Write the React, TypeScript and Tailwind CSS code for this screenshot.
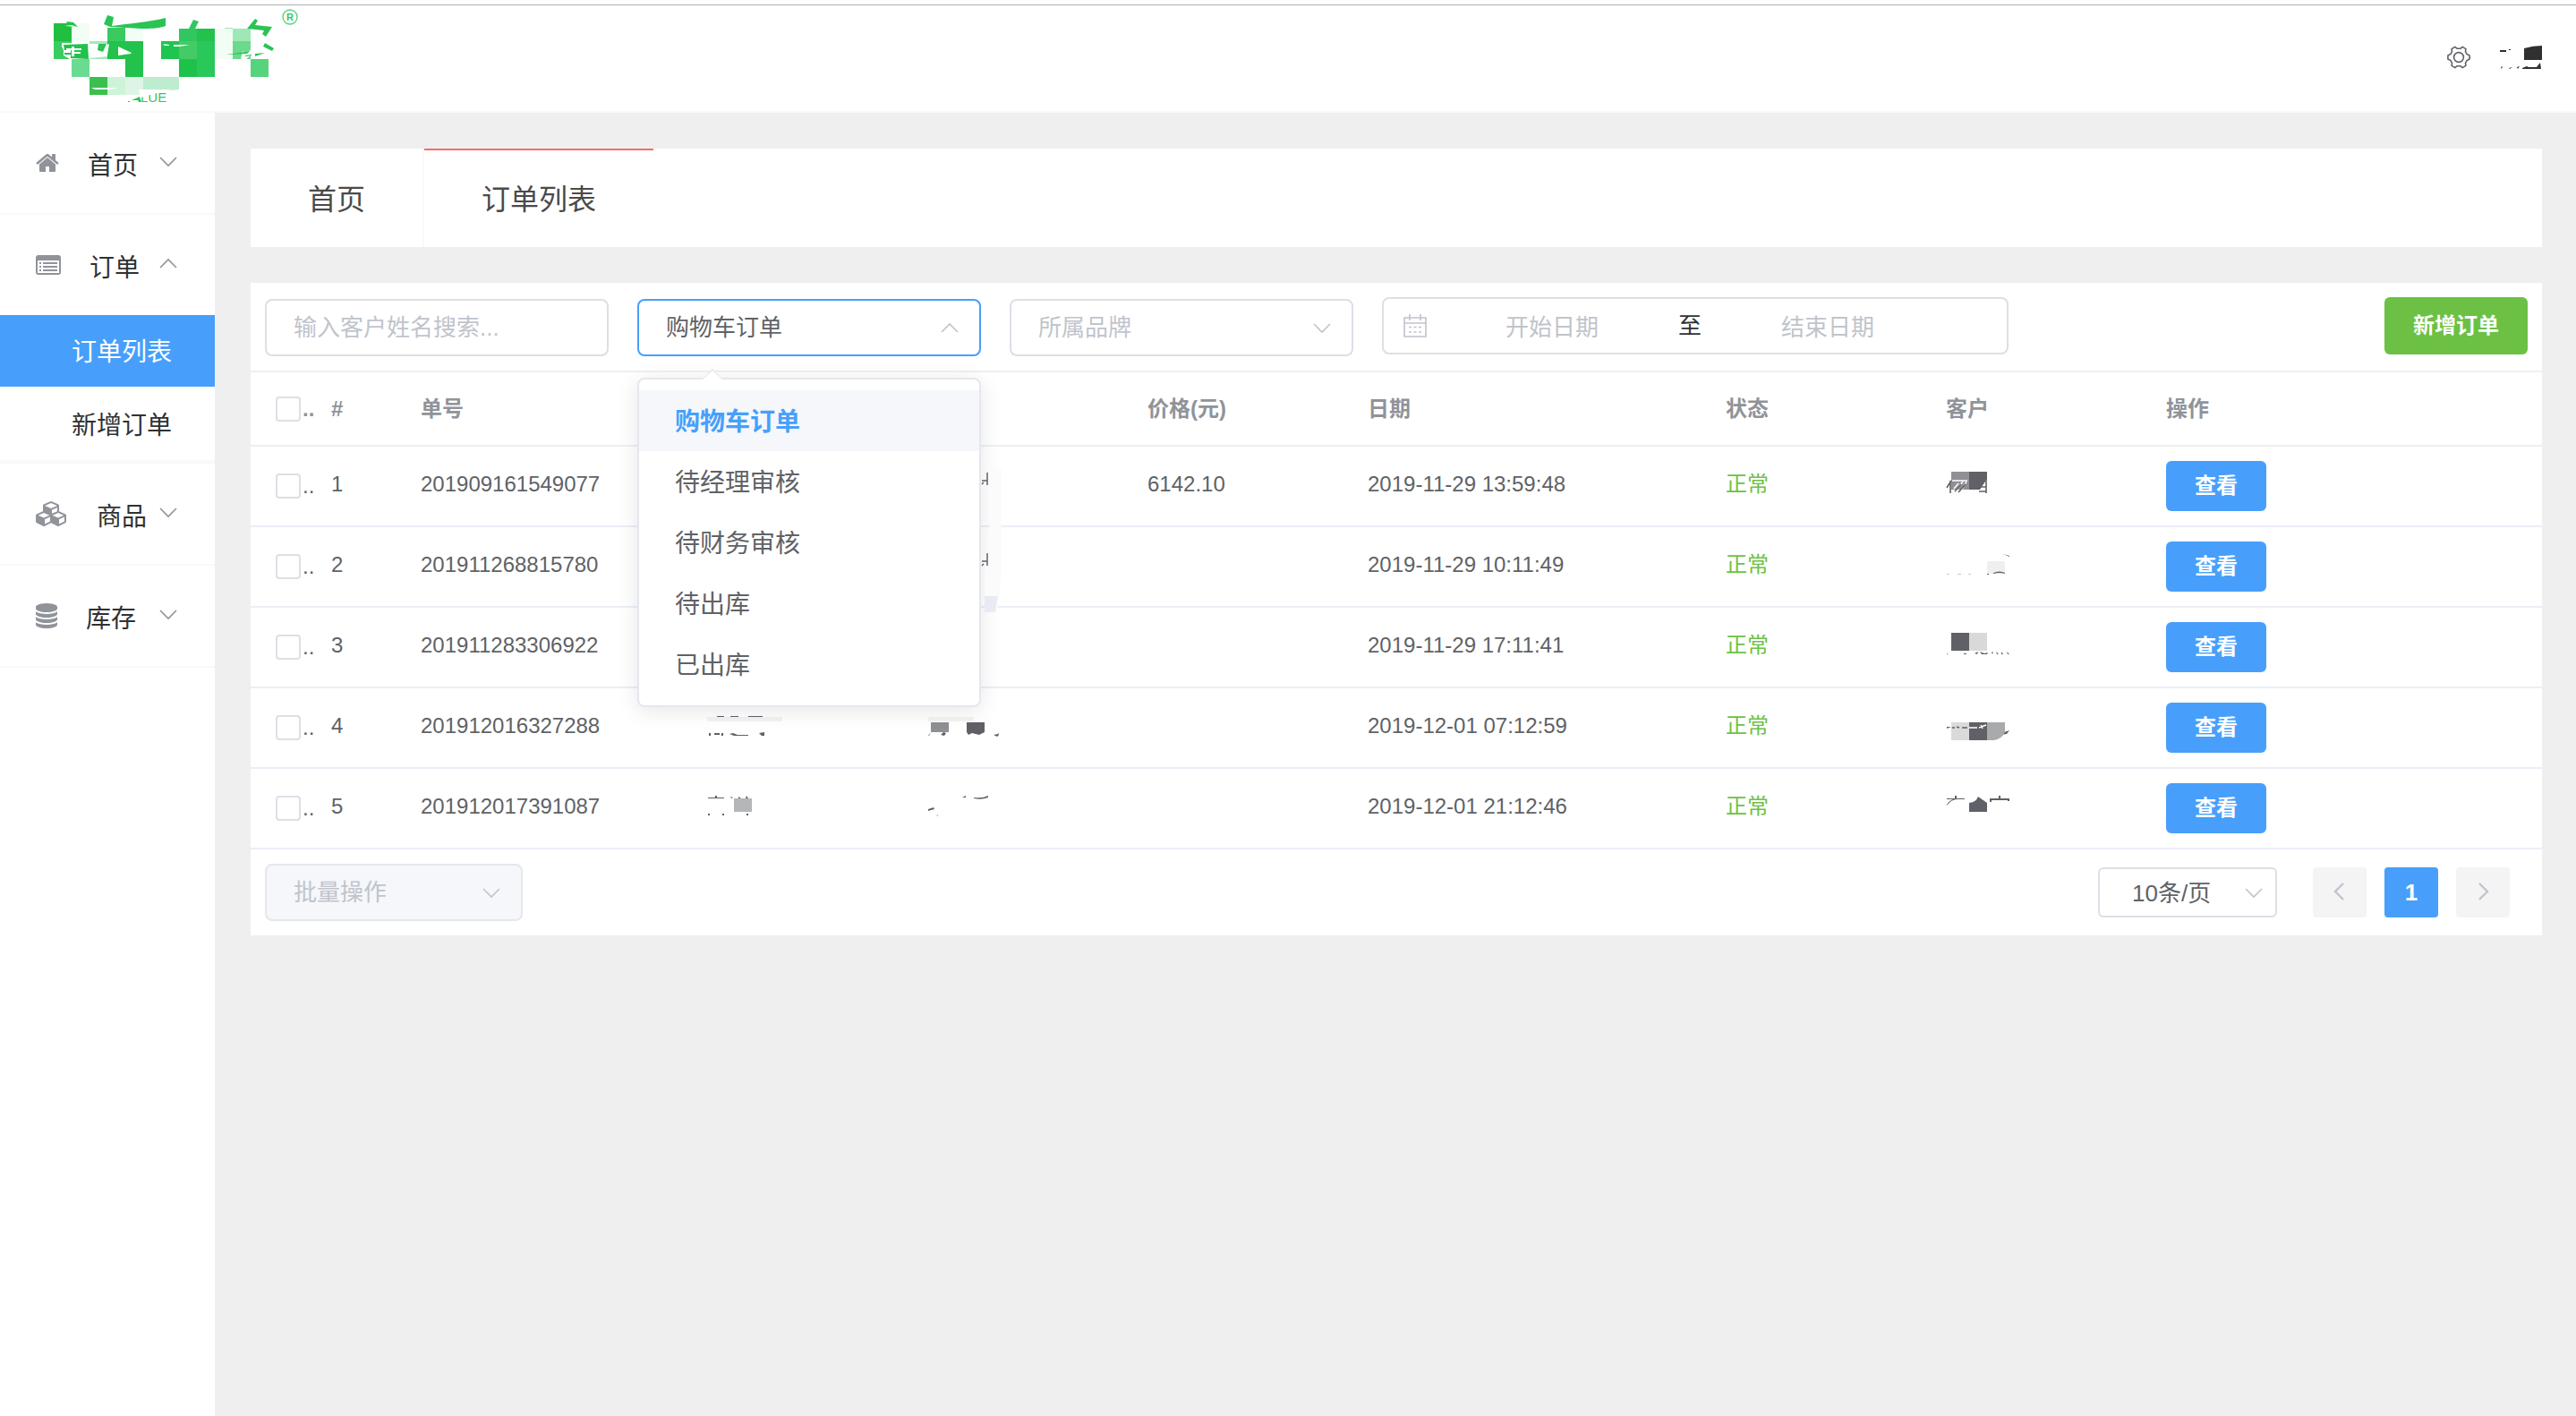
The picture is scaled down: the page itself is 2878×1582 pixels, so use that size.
import type { ReactNode } from "react";
import clsx from "clsx";

function HomeIcon() {
  return (
    <svg className="w-[26px] h-7" viewBox="64 0 1664 1792" fill="currentColor">
      <path d="M1472 992v480q0 26-19 45t-45 19h-384v-384h-256v384h-384q-26 0-45-19t-19-45v-480q0-1 .5-3t.5-3l575-474 575 474q1 2 1 6zm223-69l-62 74q-8 9-21 11h-3q-13 0-21-7l-692-577-692 577q-12 8-24 7-13-2-21-11l-62-74q-8-10-7-23.5t11-21.5l719-599q32-26 76-26t76 26l244 204v-195q0-14 9-23t23-9h192q14 0 23 9t9 23v408l219 182q10 8 11 21.5t-7 23.5z" />
    </svg>
  );
}

function ListIcon() {
  return (
    <svg className="w-7 h-7" viewBox="0 0 28 28" fill="currentColor">
      <path
        fillRule="evenodd"
        d="M3 3h22a3 3 0 0 1 3 3v16a3 3 0 0 1-3 3H3a3 3 0 0 1-3-3V6a3 3 0 0 1 3-3zM2 9v13.5q0 .5.5.5h23q.5 0 .5-.5V9z"
      />
      <path d="M4 11h2v2H4zM4 15h2v2H4zM4 19h2v2H4zM8 11h16v2H8zM8 15h16v2H8zM8 19h16v2H8z" />
    </svg>
  );
}

function CubesIcon() {
  return (
    <svg className="w-9 h-7" viewBox="0 0 2304 1792" fill="currentColor">
      <path d="M640 1632l384-192v-314l-384 164v342zm-64-454l404-173-404-173-404 173zm1088 454l384-192v-314l-384 164v342zm-64-454l404-173-404-173-404 173zm-448-293l384-165v-266l-384 164v267zm-64-379l441-189-441-189-441 189zm1088 518v416q0 36-19 67t-52 47l-448 224q-25 14-57 14t-57-14l-448-224q-4-2-7-4-2 2-7 4l-448 224q-25 14-57 14t-57-14l-448-224q-33-16-52-47t-19-67v-416q0-38 21.5-70t56.5-48l434-186v-400q0-38 21.5-70t56.5-48l448-192q23-10 50-10t50 10l448 192q35 16 56.5 48t21.5 70v400l434 186q36 16 57 48t21 70z" />
    </svg>
  );
}

function DatabaseIcon() {
  return (
    <svg className="w-6 h-7" viewBox="128 0 1536 1792" fill="currentColor">
      <path d="M896 768q237 0 443-43t325-127v170q0 69-103 128t-280 93.5-385 34.5-385-34.5-280-93.5-103-128v-170q119 84 325 127t443 43zm0 768q237 0 443-43t325-127v170q0 69-103 128t-280 93.5-385 34.5-385-34.5-280-93.5-103-128v-170q119 84 325 127t443 43zm0-384q237 0 443-43t325-127v170q0 69-103 128t-280 93.5-385 34.5-385-34.5-280-93.5-103-128v-170q119 84 325 127t443 43zm0-1152q208 0 385 34.5t280 93.5 103 128v128q0 69-103 128t-280 93.5-385 34.5-385-34.5-280-93.5-103-128v-128q0-69 103-128t280-93.5 385-34.5z" />
    </svg>
  );
}

function GearIcon() {
  return (
    <svg className="w-[26px] h-[26px]" viewBox="0 0 26 26" fill="none" stroke="currentColor" strokeWidth="1.6" strokeLinejoin="round">
      <path d="M22.200 9.600L25.100 10.900V15.100L22.200 16.400L20.500 19.300L20.900 22.400L17.200 24.600L14.700 22.700H11.300L8.800 24.600L5.100 22.400L5.500 19.300L3.800 16.400L.9 15.100V10.900L3.800 9.600L5.500 6.700L5.100 3.600L8.800 1.400L11.300 3.300H14.700L17.200 1.400L20.900 3.600L20.500 6.700Z" />
      <circle cx="13" cy="13" r="5.4" />
    </svg>
  );
}

function CalendarIcon() {
  return (
    <svg className="w-[26px] h-[26px]" viewBox="0 0 26 26" fill="none" stroke="currentColor" strokeWidth="1.6">
      <path d="M1 4h24v21H1zM1 10h24M7 0v7M19 0v7" />
      <path d="M6 14.5h3M11.500 14.500h3M17 14.500h3M6 20h3M11.500 20h3M17 20h3" />
    </svg>
  );
}

function Chevron({ up, className }: { up?: boolean; className?: string }) {
  return (
    <svg className={clsx("w-5 h-4", className)} viewBox="0 0 20 16" fill="none" stroke="currentColor" strokeWidth="1.6">
      <path d={up ? "M1 13l9-9 9 9" : "M1 4l9 9 9-9"} />
    </svg>
  );
}

function Logo() {
  return (
    <svg className="w-[280px] h-[110px] ml-[60px]" viewBox="60 6 280 110" role="img" aria-label="logo">
      <path fill="#21bf3f" d="M60 26h20v20H60z" />
      <path fill="#39cc60" d="M60 46h20v20H60z" />
      <path fill="#f2fdf5" d="M80 26h20v20H80zM140 32h20v14h-20zM240 32h20v34h-20z" />
      <path fill="#22c24d" d="M73 29l2-5 7 1 5 5z" />
      <path fill="#fff" d="M72 29l15 1-7-2zM69 48h31v18H78l-7-4v-6l-2-4z" />
      <path fill="#22c24d" d="M71 50l27-1 1 17-20-1v-4h-7v-2h7v-3h-7z" />
      <path fill="#fff" d="M74 54h6v-2h3v2h8v2h-8v2h7v2h-7v3h-3v-7h-6z" />
      <path fill="#6bdb92" d="M80 66h20v20H80z" />
      <path fill="#a5e8b9" d="M100 46h20v3h-20zM100 65l20-2v3h-20z" />
      <path fill="#2bc354" d="M110 49h9l-4 9-6-2z" />
      <path fill="#39cb60" d="M120 31h20v15h-20z" />
      <path fill="#22c24d" d="M120 46h40v40h-20V66h-20z" />
      <path fill="#fff" d="M120 50l2-1-2 12zM132 52l15 7-1 1-14 2z" />
      <path fill="#2bc354" d="M120 17l7 2-2 10c20-3 40-4 60-9v9c-8 3-18 3-27 3l-35-2-7-3z" />
      <path fill="#20c450" d="M180 46h20v20h-20z" />
      <path fill="#31c760" d="M200 32h20v14h-20zM216 22l6 2-4 8h-7z" />
      <path fill="#45ca68" d="M200 46h20v20h-20z" />
      <path fill="#1ec24a" d="M200 66h20v20h-20z" />
      <path fill="#28c85b" d="M220 32h20v54h-20z" />
      <path fill="#22c24d" d="M220 32h20v14h-20z" />
      <path fill="#fff" d="M182 49l7 1v1l-5 0zM194 50l18 0-12 2h-6z" />
      <path fill="#9ee8b5" d="M260 32h20v14h-20zM251 31h9v1h-9z" />
      <path fill="#6bd98e" d="M260 46h20v20h-20z" />
      <path fill="#fff" d="M269 66l2-9 2 2 8-4v6l-6 5z" />
      <path fill="#56d47c" d="M280 66h20v20h-20z" />
      <path fill="#2bc354" d="M285 21l3 2-3 5 19 2-7 11-4-3 2-4-19-2zM296 48l10 6-2 3-10-5zM253 61l22-3 5-2-4 4zM273 62l8-1v1l-6 1zM285 60l11-1-11 4z" />
      <path fill="#3ac04c" d="M100 86h20v20h-20z" />
      <path fill="#cdf3d9" d="M120 86h20v20h-20z" />
      <path fill="#def5e5" d="M140 86h20v20h-20z" />
      <path fill="#beeccf" d="M160 86h40v14l-25 3-15 3z" />
      <path fill="#fff" d="M102 98h30l-8 2h-18z" />
      <path fill="#34c55d" d="M147 112l9-4 2 6h-3l-1-2zM143 113h2v1h-2z" />
      <text x="157" y="114" fill="#34c55d" fontSize="15">
        LUE
      </text>
      <path fill="#fff" d="M155 100h38l-18 4-18 5z" />
      <circle cx="324" cy="19" r="8" fill="none" stroke="#5ed286" strokeWidth="1.400" />
      <text x="320" y="23" fill="#34c55d" fontSize="11" fontWeight="bold">
        R
      </text>
    </svg>
  );
}

function UserMark() {
  return (
    <svg className="w-12 h-7" viewBox="0 0 48 28" fill="#303030">
      <path d="M28 4q10-3 20-3v16H28zM1 6h7v2H1zM11 5h2v1h-2zM2 25l2-1-1 3zM11 26l4-1-3 2zM20 25l3-1-2 3zM26 26l5-2 2 1h9l4-5 1 7H26z" />
    </svg>
  );
}

function Mask({ children }: { children: ReactNode }) {
  return (
    <svg className="block w-[84px] h-10" viewBox="0 0 84 40" fill="#606166">
      {children}
    </svg>
  );
}

const menu = [
  { label: "首页", icon: <HomeIcon /> },
  { label: "订单", icon: <ListIcon />, children: ["订单列表", "新增订单"] },
  { label: "商品", icon: <CubesIcon /> },
  { label: "库存", icon: <DatabaseIcon /> },
];

const options = ["购物车订单", "待经理审核", "待财务审核", "待出库", "已出库"];

const columns = ["#", "单号", "", "", "价格(元)", "日期", "状态", "客户", "操作"];

const orders = [
  {
    no: "201909161549077",
    price: "6142.10",
    date: "2019-11-29 13:59:48",
    customer: (
      <Mask>
        <path fill="#8f8f94" d="M6 4h20v20H6z" />
        <path d="M26 4h20v8l-8 12H26z" />
        <path fill="none" stroke="#fff" strokeWidth="1.500" d="M7 14h17M14 17l-5 6M19 15l-7 9M23 15l-5 9" />
        <path fill="none" stroke="#606166" strokeWidth="1.600" d="M1 22l5-8M5 14v14M10 26l7-8M14 27l8-9M37 26h8M38 21h7M45 10v18" />
      </Mask>
    ),
  },
  {
    no: "201911268815780",
    date: "2019-11-29 10:11:49",
    customer: (
      <Mask>
        <path fill="#efefef" d="M46 14h20v14H46z" />
        <path d="M53 27q7-3 13 0v1q-6-2-13 0zM64 6l7 2v1zM46 28h2v1h-2z" />
        <path fill="#c8c8ca" d="M1 28h3v1H1zM13 28h4v1h-4zM25 28h3v1h-3z" />
      </Mask>
    ),
  },
  {
    no: "201911283306922",
    date: "2019-11-29 17:11:41",
    customer: (
      <Mask>
        <path d="M6 4h20v20H6zM32 27l4-2-1 3zM38 25l2 3h6l1-2-4 1zM51 26l2-1-1 3zM56 25l3 3h-2zM62 25l2 3h-2zM68 25l3 3h-2zM1 27l2 1H1zM20 27h3v1h-3z" />
        <path fill="#d9d9d9" d="M26 4h20v20H26z" />
      </Mask>
    ),
  },
  {
    no: "201912016327288",
    date: "2019-12-01 07:12:59",
    brand: (
      <Mask>
        <path fill="#f4f4f4" d="M0 8h84v5H0z" />
        <path d="M11 7h8v1h-8zM26 7h9v1h-9zM46 7h16v1H46zM2 26h2v3H2zM8 26h6v2H8zM16 26h2v3h-2zM25 27l4-1 5 2h12v1H30zM58 26l6-1v4h-3z" />
      </Mask>
    ),
    model: (
      <Mask>
        <path fill="#f4f4f4" d="M2 8h50v5H0z" />
        <path fill="#8f9094" d="M4 14h20v11H4z" />
        <path d="M44 14h20v11l-6 3-8-2-4 2-2-3zM4 25l-2 4H1zM18 25l3 1-2 3-4-1zM74 28l5-1v-2l1 3-2 2z" />
      </Mask>
    ),
    customer: (
      <Mask>
        <path fill="#dadada" d="M6 14h20v20H6z" />
        <path d="M26 14h20v20H26zM1 19l5 0-5 2zM62 26l9-3-3 4-7 1z" />
        <path fill="#a9aaac" d="M46 14h20v11q-4 8-12 9h-8z" />
        <path fill="none" stroke="#606166" strokeWidth="1.500" d="M7 20h3M12 19l3 1M18 20h6" />
        <path fill="none" stroke="#fff" strokeWidth="1.500" d="M26 20h9M37 20l8-3M39 17l2 4" />
      </Mask>
    ),
  },
  {
    no: "201912017391087",
    date: "2019-12-01 21:12:46",
    brand: (
      <Mask>
        <path fill="#b5b6b8" d="M30 9h20v15H30z" />
        <path d="M1 8h8V6h2v2h8v1H1zM26 7l3 1-2 1zM35 7l3 2h-3zM44 6l2 3h-3zM1 26h2v2H1zM17 26h2v2h-2zM27 26l-3 2zM44 26h2v2h-2z" />
      </Mask>
    ),
    model: (
      <Mask>
        <path d="M1 21l6-2 1 2-7 2zM10 27l2 1v1zM39 8l4-2v2zM52 8q10 1 16-2v2q-8 3-16 1z" />
      </Mask>
    ),
    customer: (
      <Mask>
        <path d="M26 14q8-1 10-7l10 7v10H26zM1 9h9V6h2v3h9v1H12q-7 1-11 7v-1q2-4 7-6H1zM49 9h10V6h2v3h10v3h-2v-1H51v2h-2z" />
      </Mask>
    ),
  },
];

function Sidebar() {
  return (
    <nav className="w-60 shrink-0 bg-white">
      {menu.map((item) => (
        <div key={item.label} className="border-b-2 border-[#f9f9f9]">
          <button className="flex items-center w-full h-28 pl-10 pr-[42px] text-[#909399]">
            {item.icon}
            <span className="ml-8 pt-2 text-[28px] leading-8 text-[#303133]">{item.label}</span>
            <Chevron up={!!item.children} className="ml-auto mb-1" />
          </button>
          {item.children && (
            <div className="flex flex-col gap-0.5 border-b-2 border-[#f9f9f9]">
              {item.children.map((child, i) => (
                <a
                  key={child}
                  href="#"
                  className={clsx(
                    "flex items-center h-20 pl-20 pt-1 text-[28px]",
                    i === 0 ? "bg-[#479ffb] text-white" : "text-[#303133]",
                  )}
                >
                  {child}
                </a>
              ))}
            </div>
          )}
        </div>
      ))}
    </nav>
  );
}

function StatusDropdown() {
  return (
    <div className="absolute z-10 top-[88px] left-0 w-full py-3 bg-white border-2 border-[#e4e7ed] rounded-lg shadow-[0_4px_24px_rgba(0,0,0,0.1)]">
      <svg className="absolute -top-3 left-[70px] w-6 h-3" viewBox="0 0 24 12">
        <path d="M0 12L12 0l12 12z" fill="#e4e7ed" />
        <path d="M1 12L12 2l11 10z" fill="#fff" />
      </svg>
      <ul>
        {options.map((option, i) => (
          <li
            key={option}
            className={clsx(
              "flex items-center h-[68px] px-10 pt-1 text-[28px]",
              i === 0 ? "bg-[#f5f7fa] text-[#479ffb] font-bold" : "text-[#606266]",
            )}
          >
            {option}
          </li>
        ))}
      </ul>
      <svg className="absolute top-[100px] -right-7 w-7 h-[160px]" viewBox="0 0 28 160">
        <path d="M10 0h15v115l-5 45H6V120l6-60z" fill="#fbfbfb" />
        <path d="M6 142h15l-4 20H6z" fill="#e8ebf4" />
        <path d="M9 4v14M3 13h6M3 17l2-2M9 94v14M3 103h6M3 108l2-2" fill="none" stroke="#606266" strokeWidth="1.500" />
      </svg>
    </div>
  );
}

function Toolbar() {
  return (
    <div className="flex items-start gap-8 p-4 border-b-2 border-[#f0f0f0]">
      <div className="flex gap-8 pt-0.5">
        <input
          type="text"
          aria-label="客户姓名"
          placeholder="输入客户姓名搜索..."
          className="w-96 h-16 px-[30px] border-2 border-[#dcdfe6] rounded-lg text-[26px] text-[#606266] placeholder:text-[#c0c4cc]"
        />
        <div className="relative w-96">
          <select
            aria-label="订单状态"
            className="appearance-none w-full h-16 px-[30px] bg-white border-2 border-[#479ffb] rounded-lg text-[26px] text-[#606266]"
          >
            {options.map((option) => (
              <option key={option}>{option}</option>
            ))}
          </select>
          <Chevron up className="absolute right-[25px] top-6 text-[#c0c4cc] pointer-events-none" />
          <StatusDropdown />
        </div>
        <div className="relative w-96">
          <select
            aria-label="所属品牌"
            className="appearance-none w-full h-16 px-[30px] bg-white border-2 border-[#dcdfe6] rounded-lg text-[26px] text-[#c0c4cc]"
          >
            <option>所属品牌</option>
          </select>
          <Chevron className="absolute right-[25px] top-6 text-[#c0c4cc] pointer-events-none" />
        </div>
      </div>
      <div className="flex items-center w-[700px] h-16 px-[22px] border-2 border-[#dcdfe6] rounded-lg text-[26px] text-[#c0c4cc]">
        <CalendarIcon />
        <input
          type="text"
          aria-label="开始日期"
          placeholder="开始日期"
          className="w-[272px] ml-1 pt-1 text-center placeholder:text-[#c0c4cc]"
        />
        <span className="w-9 text-center text-[#303133]">至</span>
        <input
          type="text"
          aria-label="结束日期"
          placeholder="结束日期"
          className="w-[272px] pt-1 text-center placeholder:text-[#c0c4cc]"
        />
      </div>
      <button className="w-40 h-16 ml-auto bg-[#6cc144] rounded-md text-2xl font-bold text-white">新增订单</button>
    </div>
  );
}

function SelectCell({ label }: { label: string }) {
  return (
    <div className="flex items-center gap-0.5 pl-7">
      <input
        type="checkbox"
        aria-label={label}
        className="appearance-none shrink-0 size-7 bg-white border-2 border-[#dcdfe6] rounded"
      />
      <span>..</span>
    </div>
  );
}

function OrderTable() {
  return (
    <table className="w-full table-fixed text-left text-2xl text-[#606266]">
      <colgroup>
        <col className="w-[70px]" />
        <col className="w-[100px]" />
        <col className="w-[320px]" />
        <col />
        <col />
        <col />
        <col className="w-[400px]" />
        <col />
        <col />
        <col className="w-[440px]" />
      </colgroup>
      <thead>
        <tr className="h-[82px] border-b-2 border-[#ebeef5] text-[#909399]">
          <th>
            <SelectCell label="全选" />
          </th>
          {columns.map((column, i) => (
            <th key={i} className="px-5">
              {column}
            </th>
          ))}
        </tr>
      </thead>
      <tbody>
        {orders.map((order, i) => (
          <tr key={order.no} className="h-[90px] border-b-2 border-[#ebeef5]">
            <td>
              <SelectCell label={order.no} />
            </td>
            <td className="px-5 pb-1">{i + 1}</td>
            <td className="px-5 pb-1">{order.no}</td>
            <td className="pl-5">{order.brand}</td>
            <td className="pl-5">{order.model}</td>
            <td className="px-5 pb-1">{order.price}</td>
            <td className="px-5 pb-1">{order.date}</td>
            <td className="px-5 pb-1 text-[#6cc144]">正常</td>
            <td className="pl-5">{order.customer}</td>
            <td className="px-5">
              <button className="block w-28 h-14 bg-[#479ffb] rounded-md text-2xl font-bold text-white">查看</button>
            </td>
          </tr>
        ))}
      </tbody>
    </table>
  );
}

function Footer() {
  return (
    <div className="flex items-center justify-between py-4 pl-4 pr-9">
      <div className="relative w-72">
        <select
          aria-label="批量操作"
          disabled
          className="appearance-none w-full h-16 px-[30px] bg-[#f5f7fa] border-2 border-[#e4e7ed] rounded-lg text-[26px] text-[#c0c4cc] opacity-100"
        >
          <option>批量操作</option>
        </select>
        <Chevron className="absolute right-[25px] top-6 text-[#c0c4cc] pointer-events-none" />
      </div>
      <div className="flex items-center gap-5 text-[26px]">
        <div className="relative w-[200px] mr-5">
          <select
            aria-label="每页条数"
            className="appearance-none block w-full h-14 pl-9 pr-11 pt-0.5 bg-white border-2 border-[#dcdfe6] rounded-md text-[#606266]"
          >
            <option>10条/页</option>
          </select>
          <Chevron className="absolute right-4 top-5 text-[#c0c4cc] pointer-events-none" />
        </div>
        <button aria-label="上一页" className="flex items-center justify-center w-[60px] h-14 bg-[#f4f4f5] rounded text-[#c0c4cc]">
          <svg className="w-6 h-6" viewBox="0 0 24 24" fill="none" stroke="currentColor" strokeWidth="2.400">
            <path d="M16 2l-9 9 9 9" />
          </svg>
        </button>
        <button className="w-[60px] h-14 bg-[#479ffb] rounded font-bold text-white">1</button>
        <button aria-label="下一页" className="flex items-center justify-center w-[60px] h-14 bg-[#f4f4f5] rounded text-[#c0c4cc]">
          <svg className="w-6 h-6" viewBox="0 0 24 24" fill="none" stroke="currentColor" strokeWidth="2.400">
            <path d="M8 2l9 9-9 9" />
          </svg>
        </button>
      </div>
    </div>
  );
}

export default function App() {
  return (
    <div className="flex flex-col min-h-screen bg-[#efefef] font-['Liberation_Sans','Noto_Sans_CJK_SC',sans-serif]">
      <header className="bg-white border-b-2 border-[#f9f9f9]">
        <div className="h-1.5 border-b border-[#b0b0b0]" />
        <div className="flex items-start justify-between h-[118px] pr-[38px]">
          <Logo />
          <div className="flex items-center gap-8 pt-11 text-[#606266]">
            <button aria-label="设置">
              <GearIcon />
            </button>
            <UserMark />
          </div>
        </div>
      </header>
      <div className="flex flex-1">
        <Sidebar />
        <main className="flex-1 min-w-0 pt-10 pl-10 pr-[38px]">
          <div className="flex h-[110px] bg-white text-[32px] text-[#4a4a4a]">
            <a href="#" className="flex items-center px-16 pt-1 border-r-2 border-[#f9f9f9]">
              首页
            </a>
            <a href="#" className="flex items-center px-16 pt-0.5 border-t-2 border-[#f56c6c]">
              订单列表
            </a>
          </div>
          <section className="mt-10 bg-white">
            <Toolbar />
            <OrderTable />
            <Footer />
          </section>
        </main>
      </div>
    </div>
  );
}
